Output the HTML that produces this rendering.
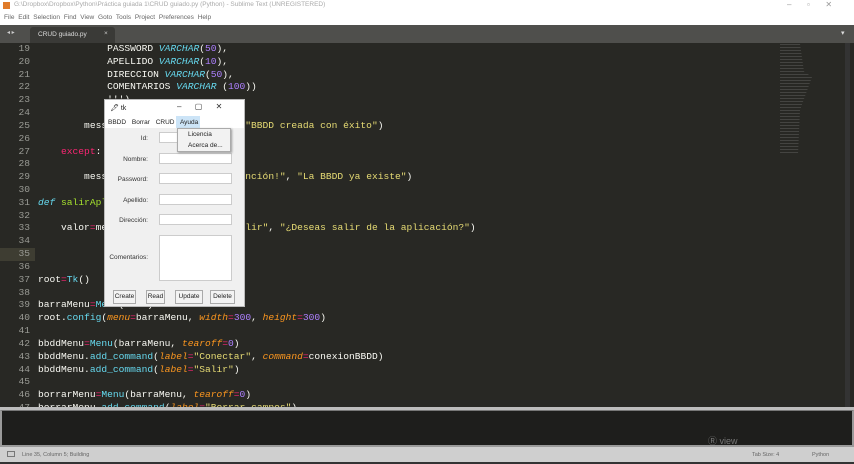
<!DOCTYPE html>
<html><head><meta charset="utf-8"><style>
*{margin:0;padding:0;box-sizing:border-box}
body{width:854px;height:464px;overflow:hidden;background:#282824;font-family:"Liberation Sans",sans-serif;position:relative}
.a{position:absolute}
.ln{position:absolute;left:0;width:30px;text-align:right;color:#9a9b95;font:9.6px/12.8px "Liberation Mono",monospace}
.cd{position:absolute;left:38px;color:#f8f8f2;font:9.6px/12.8px "Liberation Mono",monospace;white-space:pre}
.k{color:#f92672}.c{color:#66d9ef}.i{color:#66d9ef;font-style:italic}.n{color:#ae81ff}.s{color:#e6db74}.o{color:#fd971f;font-style:italic}.g{color:#a6e22e}
.tk{font-size:6.5px;color:#222}
.fld{position:absolute;left:54px;width:73px;height:11px;background:#fff;border:1px solid #ccc}
.lab{position:absolute;right:96px;font-size:6.5px;color:#333}
.btn{position:absolute;top:190px;height:14px;border:1px solid #aaa;background:#f3f3f3;font-size:6.5px;text-align:center;line-height:12px;color:#222}
</style></head><body>
<div class="a" style="left:0;top:0;width:854px;height:25px;background:#fff"></div>
<div class="a" style="left:3px;top:2px;width:7px;height:7px;background:#e07b2a"></div>
<div class="a" style="left:14px;top:1px;font-size:6.5px;color:#aaa">G:\Dropbox\Dropbox\Python\Práctica guiada 1\CRUD guiado.py (Python) - Sublime Text (UNREGISTERED)</div>
<div class="a" style="left:787px;top:0;font-size:8px;color:#999">–&nbsp;&nbsp;&nbsp;&nbsp;&nbsp;&nbsp;&nbsp;▫&nbsp;&nbsp;&nbsp;&nbsp;&nbsp;&nbsp;&nbsp;✕</div>
<div class="a" style="left:4px;top:14px;font-size:6.5px;color:#666;word-spacing:2px">File Edit Selection Find View Goto Tools Project Preferences Help</div>
<div class="a" style="left:0;top:25px;width:854px;height:18px;background:#4f4f4c"></div>
<div class="a" style="left:7px;top:29px;font-size:6px;color:#ccc">◂ ▸</div>
<div class="a" style="left:30px;top:27px;width:85px;height:16px;background:#3a3a37;border-radius:3px 3px 0 0"></div>
<div class="a" style="left:38px;top:31px;font-size:6.5px;color:#ddd">CRUD guiado.py</div>
<div class="a" style="left:104px;top:30px;font-size:6.5px;color:#ccc">×</div>
<div class="a" style="left:841px;top:29px;font-size:7px;color:#ddd">▾</div>
<div class="a" style="left:845px;top:43px;width:5px;height:366px;background:#333"></div>
<div class="a" style="left:780px;top:44px;width:40px;height:110px;opacity:.25;background:repeating-linear-gradient(#999 0 1px,transparent 1px 3px);clip-path:polygon(0 0,50% 0,60% 25%,80% 30%,50% 60%,45% 100%,0 100%)"></div>
<div class="a" style="left:0;top:248px;width:35px;height:13px;background:#3e3d32"></div>
<div id="code"></div>
<script>
var L={19:"            PASSWORD <span class=i>VARCHAR</span>(<span class=n>50</span>),",
20:"            APELLIDO <span class=i>VARCHAR</span>(<span class=n>10</span>),",
21:"            DIRECCION <span class=i>VARCHAR</span>(<span class=n>50</span>),",
22:"            COMENTARIOS <span class=i>VARCHAR</span> (<span class=n>100</span>))",
23:"            ''')",24:"",
25:"        messagebox.<span class=c>showinfo</span>(<span class=s>\"BBDD\"</span>, <span class=s>\"BBDD creada con éxito\"</span>)",
26:"",27:"    <span class=k>except</span>:",28:"",
29:"        messagebox.<span class=c>showwarning</span>(<span class=s>\"¡Atención!\"</span>, <span class=s>\"La BBDD ya existe\"</span>)",
30:"",31:"<span class=i>def</span> <span class=g>salirAplicacion</span>():",32:"",
33:"    valor<span class=k>=</span>messagebox.<span class=c>askquestion</span>(<span class=s>\"Salir\"</span>, <span class=s>\"¿Deseas salir de la aplicación?\"</span>)",
34:"",35:"",36:"",37:"root<span class=k>=</span><span class=c>Tk</span>()",38:"",
39:"barraMenu<span class=k>=</span><span class=c>Menu</span>(root)",
40:"root.<span class=c>config</span>(<span class=o>menu</span><span class=k>=</span>barraMenu, <span class=o>width</span><span class=k>=</span><span class=n>300</span>, <span class=o>height</span><span class=k>=</span><span class=n>300</span>)",
41:"",42:"bbddMenu<span class=k>=</span><span class=c>Menu</span>(barraMenu, <span class=o>tearoff</span><span class=k>=</span><span class=n>0</span>)",
43:"bbddMenu.<span class=c>add_command</span>(<span class=o>label</span><span class=k>=</span><span class=s>\"Conectar\"</span>, <span class=o>command</span><span class=k>=</span>conexionBBDD)",
44:"bbddMenu.<span class=c>add_command</span>(<span class=o>label</span><span class=k>=</span><span class=s>\"Salir\"</span>)",45:"",
46:"borrarMenu<span class=k>=</span><span class=c>Menu</span>(barraMenu, <span class=o>tearoff</span><span class=k>=</span><span class=n>0</span>)",
47:"borrarMenu.<span class=c>add_command</span>(<span class=o>label</span><span class=k>=</span><span class=s>\"Borrar campos\"</span>)"};
var h="";for(var n=19;n<=47;n++){var t=43+(n-19)*12.82;h+='<div class=ln style="top:'+t+'px">'+n+'</div><div class=cd style="top:'+t+'px">'+L[n]+'</div>';}
document.getElementById("code").innerHTML=h;
</script>
<div class="a" style="left:0;top:407px;width:854px;height:4px;background:#bdbdbd"></div>
<div class="a" style="left:0;top:410px;width:854px;height:37px;background:#1e1e1c;border:2px solid #9a9a9a;border-top:1px solid #777"></div>
<div class="a" style="left:708px;top:434px;font-size:9px;color:#777">Ⓡ view</div>
<div class="a" style="left:0;top:447px;width:854px;height:15px;background:#cfcfcf"></div>
<div class="a" style="left:0;top:462px;width:854px;height:2px;background:#333"></div>
<div class="a" style="left:7px;top:451px;width:8px;height:6px;border:1px solid #777"></div>
<div class="a" style="left:22px;top:452px;font-size:5.5px;color:#666">Line 35, Column 5; Building</div>
<div class="a" style="left:752px;top:452px;font-size:5.5px;color:#666">Tab Size: 4</div>
<div class="a" style="left:812px;top:452px;font-size:5.5px;color:#666">Python</div>
<!-- tk window -->
<div class="a" style="left:104px;top:99px;width:141px;height:208px;background:#f0f0f0;border:1px solid #bbb">
<div class="a" style="left:0;top:0;width:139px;height:16px;background:#fff"></div>
<div class="a tk" style="left:5px;top:4px;font-size:7px">🖋 tk</div>
<div class="a" style="left:72px;top:2px;font-size:8px;color:#333">–&nbsp;&nbsp;&nbsp;&nbsp;&nbsp;&nbsp;▢&nbsp;&nbsp;&nbsp;&nbsp;&nbsp;&nbsp;✕</div>
<div class="a" style="left:0;top:16px;width:139px;height:12px;background:#fff"></div>
<div class="a" style="left:71px;top:16px;width:24px;height:12px;background:#cce4f7"></div>
<div class="a tk" style="left:3px;top:19px;word-spacing:4px">BBDD Borrar CRUD Ayuda</div>
<div class="lab" style="top:35px">Id:</div><div class="fld" style="top:32px;width:20px"></div>
<div class="lab" style="top:56px">Nombre:</div><div class="fld" style="top:53px"></div>
<div class="lab" style="top:76px">Password:</div><div class="fld" style="top:73px"></div>
<div class="lab" style="top:97px">Apellido:</div><div class="fld" style="top:94px"></div>
<div class="lab" style="top:117px">Dirección:</div><div class="fld" style="top:114px"></div>
<div class="lab" style="top:154px">Comentarios:</div><div class="fld" style="top:135px;height:46px"></div>
<div class="btn" style="left:8px;width:23px">Create</div>
<div class="btn" style="left:41px;width:19px">Read</div>
<div class="btn" style="left:70px;width:28px">Update</div>
<div class="btn" style="left:105px;width:25px">Delete</div>
<div class="a" style="left:72px;top:28px;width:54px;height:24px;background:#f2f2f2;border:1px solid #aaa;box-shadow:1px 1px 2px #999"></div>
<div class="a tk" style="left:83px;top:31px">Licencia</div>
<div class="a tk" style="left:83px;top:42px">Acerca de...</div>
</div>
</body></html>
